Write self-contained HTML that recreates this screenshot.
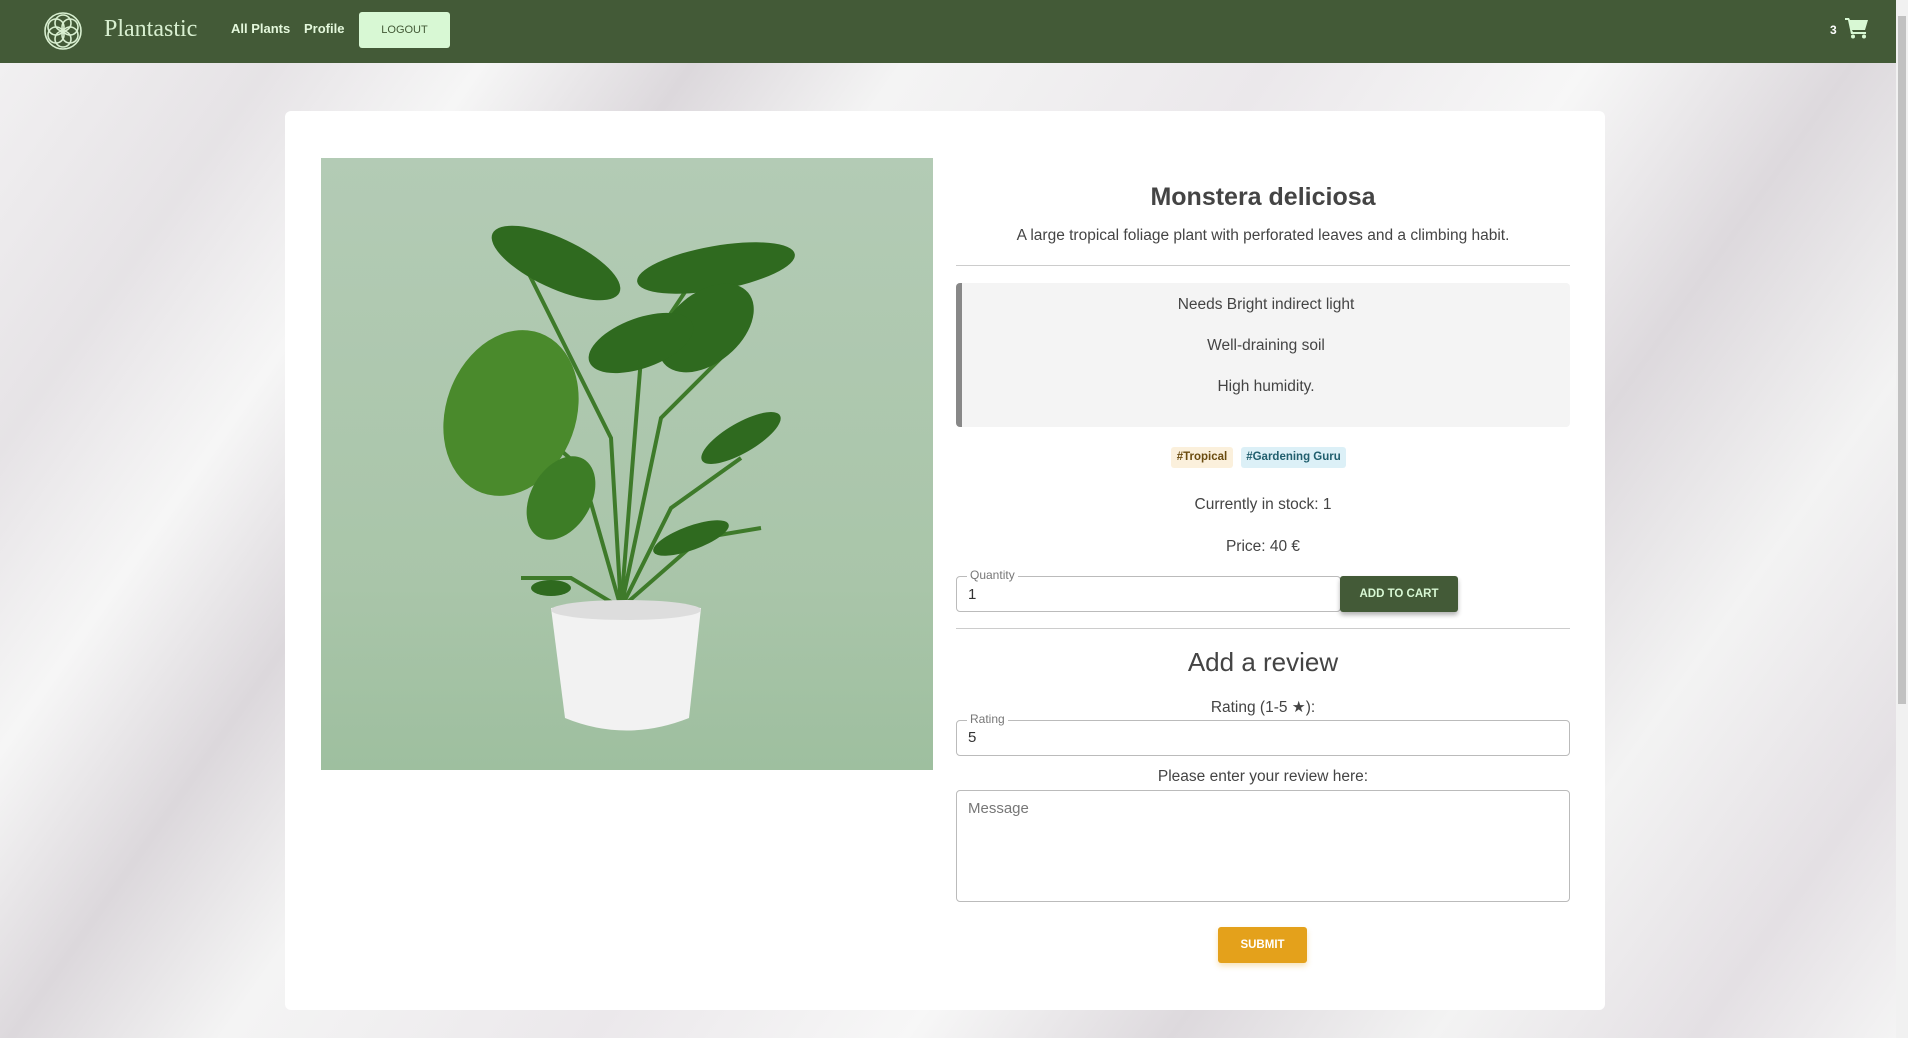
<!DOCTYPE html>
<html><head><meta charset="utf-8"><style>
*{box-sizing:border-box;margin:0;padding:0}
body{width:1908px;height:1038px;overflow:hidden;font-family:"Liberation Sans",sans-serif;color:#444;position:relative;
background:linear-gradient(125deg,#f3f2f3 0%,#e6e3e6 12%,#f6f6f6 20%,#dcd8dc 28%,#f4f4f4 36%,#ebe8eb 50%,#f7f7f7 62%,#ddd9dd 72%,#f3f3f3 82%,#e4e0e4 92%,#f5f5f5 100%)}
.nav{position:absolute;left:0;top:0;width:1896px;height:63px;background:#435a37}
.a{position:absolute}
.c{text-align:center}
.card{position:absolute;left:285px;top:111px;width:1320px;height:899px;background:#fff;border-radius:6px}
.sb{position:absolute;left:1896px;top:0;width:12px;height:1038px;background:#f1f1f1}
.sb div{position:absolute;left:2px;top:16px;width:8px;height:688px;background:#c1c1c1}
.in{position:absolute;border:1px solid #bbb;border-radius:4px;background:#fff}
.lab{position:absolute;top:-9px;left:10px;background:#fff;padding:0 3px;font-size:12px;color:#777}
</style></head><body>
<div class="nav">
 <svg class="a" style="left:43px;top:11px" width="40" height="40" viewBox="0 0 40 40" fill="none" stroke="#d8efd0" stroke-width="1.6"><circle cx="20" cy="20" r="18"/><circle cx="20" cy="12" r="8"/><circle cx="20" cy="28" r="8"/><circle cx="13" cy="16" r="8"/><circle cx="27" cy="16" r="8"/><circle cx="13" cy="24" r="8"/><circle cx="27" cy="24" r="8"/></svg>
 <div class="a" style="left:104px;top:16px;font-family:'Liberation Serif',serif;font-size:24px;color:#d8efd0">Plantastic</div>
 <div class="a" style="left:231px;top:21px;font-size:13px;font-weight:bold;color:#e4f8dc">All Plants</div>
 <div class="a" style="left:304px;top:21px;font-size:13px;font-weight:bold;color:#e4f8dc">Profile</div>
 <div class="a c" style="left:359px;top:12px;width:91px;height:36px;background:#d8f8d4;border-radius:3px;font-size:11px;line-height:36px;color:#435a37">LOGOUT</div>
 <div class="a" style="left:1830px;top:23px;font-size:12px;font-weight:bold;color:#fff">3</div>
 <svg class="a" style="left:1845px;top:17px" width="24" height="22" viewBox="0 0 24 22" fill="#d8f8d4"><path d="M0 1h4l1 2h18l-3 10H7l1 2h13v2H6L3 3H0z"/><circle cx="8" cy="19.5" r="2"/><circle cx="19" cy="19.5" r="2"/></svg>
</div>
<div class="card">
 <svg class="a" style="left:36px;top:47px" width="612" height="612" viewBox="0 0 612 612">
  <defs><linearGradient id="g" x1="0" y1="0" x2="0" y2="1"><stop offset="0" stop-color="#b3cbb5"/><stop offset="0.7" stop-color="#a9c5a9"/><stop offset="1" stop-color="#9ebf9f"/></linearGradient></defs>
  <rect width="612" height="612" fill="url(#g)"/>
  <g stroke="#3e7a2a" stroke-width="4" fill="none"><path d="M300 450 L290 280 L200 100"/><path d="M300 450 L320 200 L380 110"/><path d="M300 450 L260 310 L180 240"/><path d="M300 450 L340 260 L420 180"/><path d="M300 450 L350 350 L420 300"/><path d="M300 450 L250 420 L200 420"/><path d="M300 450 L380 380 L440 370"/></g>
  <g fill="#2f6a1f"><ellipse cx="190" cy="255" rx="65" ry="85" transform="rotate(20 190 255)" fill="#4a8a2c"/><ellipse cx="235" cy="105" rx="70" ry="25" transform="rotate(25 235 105)"/><ellipse cx="395" cy="110" rx="80" ry="22" transform="rotate(-10 395 110)"/><ellipse cx="385" cy="170" rx="55" ry="35" transform="rotate(-40 385 170)"/><ellipse cx="320" cy="185" rx="55" ry="25" transform="rotate(-20 320 185)"/><ellipse cx="420" cy="280" rx="45" ry="15" transform="rotate(-30 420 280)"/><ellipse cx="240" cy="340" rx="30" ry="45" transform="rotate(30 240 340)" fill="#3d7d26"/><ellipse cx="370" cy="380" rx="40" ry="12" transform="rotate(-20 370 380)"/><ellipse cx="230" cy="430" rx="20" ry="8"/></g>
  <path d="M230 450 Q305 440 380 450 L368 560 Q305 585 244 560 Z" fill="#f2f2f2"/>
  <ellipse cx="305" cy="452" rx="75" ry="10" fill="#ddd"/>
 </svg>
 <div class="a c" style="left:671px;top:72px;width:614px;font-size:25px;font-weight:bold;color:#444">Monstera deliciosa</div>
 <div class="a c" style="left:671px;top:116px;width:614px;font-size:15.5px">A large tropical foliage plant with perforated leaves and a climbing habit.</div>
 <div class="a" style="left:671px;top:154px;width:614px;height:1px;background:#ccc"></div>
 <div class="a c" style="left:671px;top:172px;width:614px;height:144px;background:#f4f4f4;border-left:6px solid #888;border-radius:4px;font-size:15.5px;line-height:41px;padding-top:1px">Needs Bright indirect light<br>Well-draining soil<br>High humidity.</div>
 <div class="a" style="left:886px;top:336px;width:62px;height:21px;background:#fbf0dc;border-radius:3px;font-size:11.5px;font-weight:bold;color:#6b4c10;text-align:center;line-height:21px">#Tropical</div>
 <div class="a" style="left:956px;top:336px;width:105px;height:21px;background:#dcf0f7;border-radius:3px;font-size:11.5px;font-weight:bold;color:#215f6e;text-align:center;line-height:21px">#Gardening Guru</div>
 <div class="a c" style="left:671px;top:385px;width:614px;font-size:15.5px">Currently in stock: 1</div>
 <div class="a c" style="left:671px;top:427px;width:614px;font-size:15.5px">Price: 40 €</div>
 <div class="in" style="left:671px;top:465px;width:385px;height:36px"><span class="lab">Quantity</span><span class="a" style="left:11px;top:9px;font-size:15px;color:#333">1</span></div>
 <div class="a c" style="left:1055px;top:465px;width:118px;height:36px;background:#435a37;border-radius:3px;color:#d8f8d4;font-size:11.5px;font-weight:bold;line-height:36px;box-shadow:0 3px 5px rgba(0,0,0,.3)">ADD TO CART</div>
 <div class="a" style="left:671px;top:517px;width:614px;height:1px;background:#ccc"></div>
 <div class="a c" style="left:671px;top:536px;width:614px;font-size:26px">Add a review</div>
 <div class="a c" style="left:671px;top:587px;width:614px;font-size:15.5px">Rating (1-5 ★):</div>
 <div class="in" style="left:671px;top:609px;width:614px;height:36px"><span class="lab">Rating</span><span class="a" style="left:11px;top:8px;font-size:15px;color:#333">5</span></div>
 <div class="a c" style="left:671px;top:657px;width:614px;font-size:15.5px">Please enter your review here:</div>
 <div class="in" style="left:671px;top:679px;width:614px;height:112px"><span class="a" style="left:11px;top:9px;font-size:15px;color:#777">Message</span></div>
 <div class="a c" style="left:933px;top:816px;width:89px;height:36px;background:#e4a11b;border-radius:3px;color:#fff;font-size:11.5px;font-weight:bold;line-height:36px;box-shadow:0 3px 6px rgba(228,161,27,.3)">SUBMIT</div>
</div>
<div class="sb"><div></div></div>
</body></html>
